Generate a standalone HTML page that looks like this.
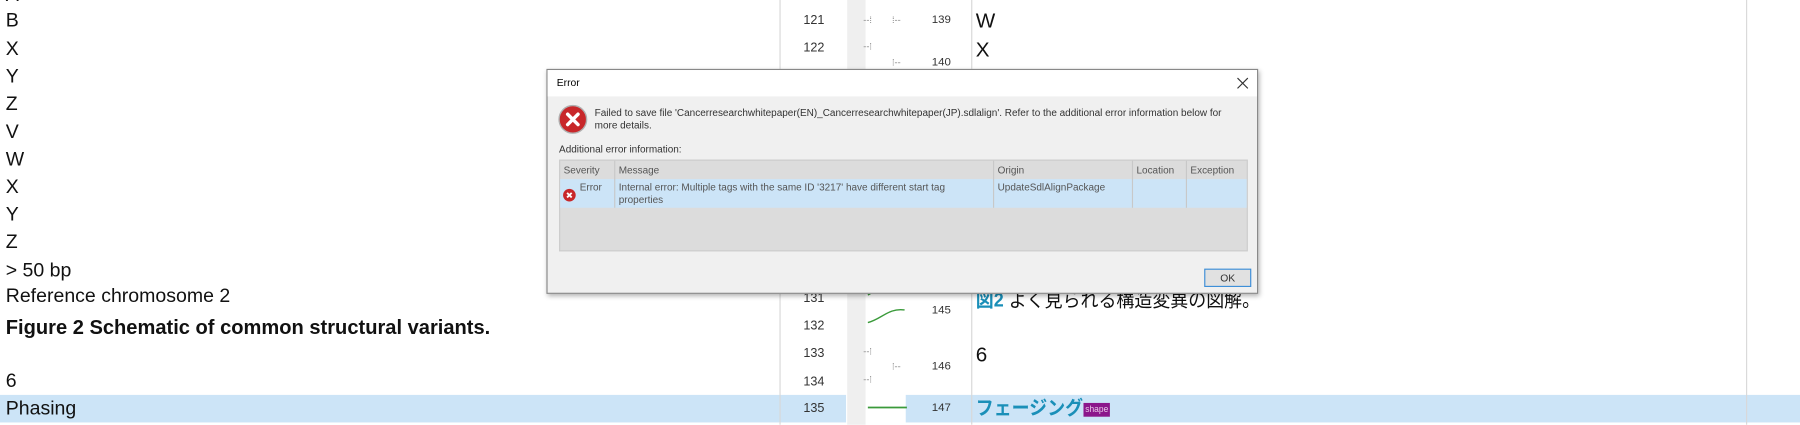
<!DOCTYPE html>
<html><head><meta charset="utf-8"><style>
html,body{margin:0;padding:0;width:1800px;height:425px;overflow:hidden;background:#fff}
#w{position:absolute;left:0;top:0;width:1568px;height:370px;transform:scale(1.14796);transform-origin:0 0;font-family:"Liberation Sans","Noto Sans CJK JP",sans-serif}
.a{position:absolute;white-space:nowrap}
.lt{left:5px;font-size:17px;color:#111;line-height:20px}
.n{font-size:11px;color:#333;width:40px;text-align:center;line-height:14px}
.rn{font-size:10px;color:#333;width:30px;text-align:center;line-height:14px}
.rt{left:850px;font-size:18px;color:#111;line-height:22px}
.c{font-size:8px;color:#888;line-height:10px}
.d{font-size:9px;color:#333}
</style></head><body><div id="w">
<div class="a" style="left:0;top:344px;width:737px;height:24px;background:#cce4f7"></div>
<div class="a" style="left:789px;top:344px;width:779px;height:24px;background:#cce4f7"></div>
<div class="a" style="left:679px;top:0;width:1px;height:370px;background:#d8d8d8"></div>
<div class="a" style="left:738px;top:0;width:16px;height:370px;background:#efefef"></div>
<div class="a" style="left:846px;top:0;width:1px;height:370px;background:#d8d8d8"></div>
<div class="a" style="left:1521px;top:0;width:1px;height:370px;background:#d8d8d8"></div>

<div class="a lt" style="top:-14px">A</div>
<div class="a lt" style="top:8px">B</div>
<div class="a lt" style="top:33px">X</div>
<div class="a lt" style="top:57px">Y</div>
<div class="a lt" style="top:81px">Z</div>
<div class="a lt" style="top:105px">V</div>
<div class="a lt" style="top:129px">W</div>
<div class="a lt" style="top:153px">X</div>
<div class="a lt" style="top:177px">Y</div>
<div class="a lt" style="top:201px">Z</div>
<div class="a lt" style="top:226px">&gt; 50 bp</div>
<div class="a lt" style="top:248px">Reference chromosome 2</div>
<div class="a lt" style="top:275px;font-weight:bold;font-size:17.5px">Figure 2 Schematic of common structural variants.</div>
<div class="a lt" style="top:322px">6</div>
<div class="a lt" style="top:346px">Phasing</div>

<div class="a n" style="left:689px;top:11px">121</div>
<div class="a n" style="left:689px;top:35px">122</div>
<div class="a n" style="left:689px;top:253px">131</div>
<div class="a n" style="left:689px;top:277px">132</div>
<div class="a n" style="left:689px;top:301px">133</div>
<div class="a n" style="left:689px;top:326px">134</div>
<div class="a n" style="left:689px;top:349px">135</div>

<div class="a c" style="left:752px;top:13px">--⁞</div>
<div class="a c" style="left:777px;top:13px">⁞--</div>
<div class="a c" style="left:752px;top:36px">--⁞</div>
<div class="a c" style="left:777px;top:50px">⁞--</div>
<div class="a c" style="left:752px;top:302px">--⁞</div>
<div class="a c" style="left:777px;top:315px">⁞--</div>
<div class="a c" style="left:752px;top:326px">--⁞</div>
<svg class="a" style="left:754px;top:240px" width="40" height="120"><path d="M2 17 C8 14 10 10 12 6" stroke="#3a9a3a" fill="none" stroke-width="1.2"/><path d="M2 41 C14 38 20 28 34 30" stroke="#3a9a3a" fill="none" stroke-width="1.2"/><path d="M2 115 L36 115" stroke="#3a9a3a" stroke-width="1.5"/></svg>

<div class="a rn" style="left:805px;top:11px">139</div>
<div class="a rn" style="left:805px;top:48px">140</div>
<div class="a rn" style="left:805px;top:264px">145</div>
<div class="a rn" style="left:805px;top:313px">146</div>
<div class="a rn" style="left:805px;top:349px">147</div>

<div class="a rt" style="top:7px">W</div>
<div class="a rt" style="top:32px">X</div>
<div class="a rt" style="top:251px;font-size:17px;transform:scaleX(0.92);transform-origin:0 0"><b style="color:#1a8fb8">図2</b> よく見られる構造変異の図解。</div>
<div class="a rt" style="top:298px">6</div>
<div class="a rt" style="top:345px;color:#1a8fb8;font-weight:bold;font-size:17px;transform:scaleX(0.92);transform-origin:0 0">フェージング<span style="display:inline-block;background:#8b168b;color:#e8c8e8;font-size:8px;font-weight:normal;padding:1px 2px;line-height:10px;vertical-align:middle">shape</span></div>

<div class="a" style="left:476px;top:60px;width:618px;height:194px;background:#f0f0f0;border:1px solid #888;box-shadow:1px 2px 4px rgba(0,0,0,.3)">
 <div class="a" style="left:0;top:0;width:618px;height:23px;background:#fff"></div>
 <div class="a d" style="left:8px;top:6px;color:#000">Error</div>
 <svg class="a" style="left:600px;top:6px" width="11" height="11"><path d="M1 1 L10 10 M10 1 L1 10" stroke="#333" stroke-width="1"/></svg>
 <svg class="a" style="left:9px;top:30px" width="26" height="26"><circle cx="13" cy="13" r="12" fill="#c8272a" stroke="#b0b0b0" stroke-width="1.2"/><path d="M8.5 8.5 L17.5 17.5 M17.5 8.5 L8.5 17.5" stroke="#fff" stroke-width="3" stroke-linecap="round"/></svg>
 <div class="a d" style="left:41px;top:32px;font-size:8.7px">Failed to save file 'Cancerresearchwhitepaper(EN)_Cancerresearchwhitepaper(JP).sdlalign'. Refer to the additional error information below for</div>
 <div class="a d" style="left:41px;top:43px;font-size:8.7px">more details.</div>
 <div class="a d" style="left:10px;top:64px;font-size:8.7px">Additional error information:</div>
 <div class="a" style="left:10px;top:78px;width:598px;height:78px;background:#dcdcdc;border:1px solid #ccc">
  <div class="a" style="left:0;top:16px;width:598px;height:25px;background:#cce4f7"></div>
  <div class="a" style="left:47px;top:0;width:1px;height:41px;background:#c8c8c8"></div>
  <div class="a" style="left:377px;top:0;width:1px;height:41px;background:#c8c8c8"></div>
  <div class="a" style="left:498px;top:0;width:1px;height:41px;background:#c8c8c8"></div>
  <div class="a" style="left:545px;top:0;width:1px;height:41px;background:#c8c8c8"></div>
  <div class="a d" style="left:3px;top:3px;color:#555;font-size:8.7px">Severity</div>
  <div class="a d" style="left:51px;top:3px;color:#555;font-size:8.7px">Message</div>
  <div class="a d" style="left:381px;top:3px;color:#555;font-size:8.7px">Origin</div>
  <div class="a d" style="left:502px;top:3px;color:#555;font-size:8.7px">Location</div>
  <div class="a d" style="left:549px;top:3px;color:#555;font-size:8.7px">Exception</div>
  <svg class="a" style="left:2px;top:24px" width="12" height="12"><circle cx="6" cy="6" r="5.5" fill="#c8272a"/><path d="M4 4 L8 8 M8 4 L4 8" stroke="#fff" stroke-width="1.6"/></svg>
  <div class="a d" style="left:17px;top:18px;color:#555;font-size:8.7px">Error</div>
  <div class="a d" style="left:51px;top:18px;color:#555;font-size:8.7px">Internal error: Multiple tags with the same ID '3217' have different start tag</div>
  <div class="a d" style="left:51px;top:29px;color:#555;font-size:8.7px">properties</div>
  <div class="a d" style="left:381px;top:18px;color:#555;font-size:8.7px">UpdateSdlAlignPackage</div>
 </div>
 <div class="a" style="left:572px;top:173px;width:39px;height:14px;background:#e1e1e1;border:1px solid #3c8ed8;font-size:9px;color:#333;text-align:center;line-height:14px">OK</div>
</div>
</div></body></html>
